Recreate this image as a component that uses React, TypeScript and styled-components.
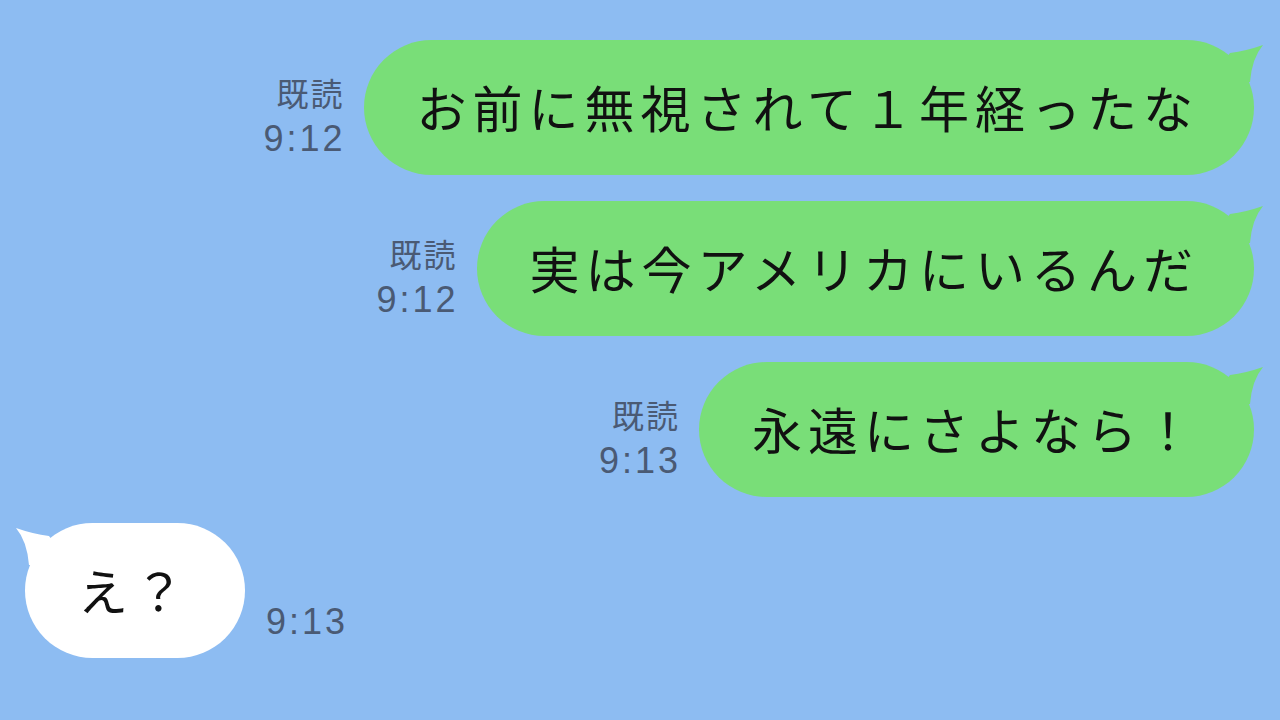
import React from "react";
import styled, { createGlobalStyle } from "styled-components";

const GlobalStyle = createGlobalStyle`
  html, body {
    margin: 0;
    padding: 0;
    background: #8dbcf2;
  }
  body {
    width: 1280px;
    height: 720px;
    overflow: hidden;
    font-family: "Noto Sans CJK JP", "Noto Sans", sans-serif;
  }
`;

const Chat = styled.div`
  display: flex;
  flex-direction: column;
  gap: 26px;
  padding: 40px 26px 0 25px;
`;

const Row = styled.div`
  display: flex;
  justify-content: flex-end;
  align-items: flex-end;
  gap: 21px;
`;

const Meta = styled.div<{ $mine: boolean }>`
  display: flex;
  flex-direction: column;
  align-items: ${(p) => (p.$mine ? "flex-end" : "flex-start")};
  gap: 13px;
  padding-bottom: 18px;
  color: #4a5a74;
`;

const ReadLabel = styled.span`
  font-size: 32px;
  line-height: 1;
  letter-spacing: 2px;
  margin-right: -2px;
`;

const Time = styled.span<{ $mine: boolean }>`
  font-family: "Liberation Sans", "Noto Sans", sans-serif;
  font-size: 36px;
  line-height: 1;
  letter-spacing: 3px;
  ${(p) => (p.$mine ? "margin-right: -3px;" : "")}
`;

const Bubble = styled.div<{ $mine: boolean }>`
  position: relative;
  height: 135px;
  box-sizing: border-box;
  border-radius: 68px;
  padding: 0 55px 4px 53px;
  display: flex;
  align-items: center;
  background: ${(p) => (p.$mine ? "#79de78" : "#ffffff")};
  color: #111;
  font-size: 50px;
  letter-spacing: 6px;
  white-space: nowrap;
  line-height: 1;
`;

const TailSvg = styled.svg<{ $mine: boolean }>`
  position: absolute;
  top: 0;
  width: 50px;
  height: 50px;
  ${(p) =>
    p.$mine
      ? "right: -10px;"
      : "left: -10px; transform: scaleX(-1);"}
`;

const Spacer = styled.div`
  flex: 1;
`;

function Tail({ mine }: { mine: boolean }) {
  return (
    <TailSvg $mine={mine} viewBox="0 0 50 50">
      <path
        d="M8 24 L16 13 Q32 11 49 5 Q38 18 36 42 L8 42 Z"
        fill={mine ? "#79de78" : "#ffffff"}
      />
    </TailSvg>
  );
}

type Msg = { mine: boolean; text: string; time: string; read?: boolean };

const messages: Msg[] = [
  { mine: true, text: "お前に無視されて１年経ったな", time: "9:12", read: true },
  { mine: true, text: "実は今アメリカにいるんだ", time: "9:12", read: true },
  { mine: true, text: "永遠にさよなら！", time: "9:13", read: true },
  { mine: false, text: "え？", time: "9:13" },
];

export default function App() {
  return (
    <>
      <GlobalStyle />
      <Chat>
        {messages.map((m, i) =>
          m.mine ? (
            <Row key={i}>
              <Meta $mine>
                {m.read && <ReadLabel>既読</ReadLabel>}
                <Time $mine>{m.time}</Time>
              </Meta>
              <Bubble $mine>
                <Tail mine />
                {m.text}
              </Bubble>
            </Row>
          ) : (
            <Row key={i}>
              <Bubble $mine={false}>
                <Tail mine={false} />
                {m.text}
              </Bubble>
              <Meta $mine={false}>
                <Time $mine={false}>{m.time}</Time>
              </Meta>
              <Spacer />
            </Row>
          )
        )}
      </Chat>
    </>
  );
}
